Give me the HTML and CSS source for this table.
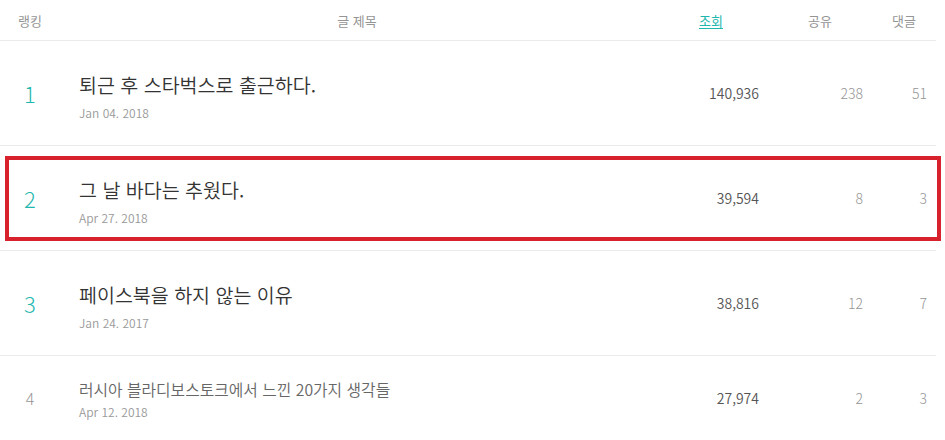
FILE: index.html
```html
<!DOCTYPE html>
<html lang="ko">
<head>
<meta charset="utf-8">
<title>랭킹</title>
<link rel="stylesheet" href="styles.css">
</head>
<body>
<div class="ranking">
  <div class="head">
    <div class="c-rank">랭킹</div>
    <div class="c-title">글 제목</div>
    <div class="c-num active">조회</div>
    <div class="c-num">공유</div>
    <div class="c-num">댓글</div>
  </div>

  <div class="row top">
    <div class="rank">1</div>
    <div class="post">
      <div class="title">퇴근 후 스타벅스로 출근하다.</div>
      <div class="date">Jan 04. 2018</div>
    </div>
    <div class="views">140,936</div>
    <div class="stat">238</div>
    <div class="stat">51</div>
  </div>

  <div class="row top highlighted">
    <div class="rank">2</div>
    <div class="post">
      <div class="title">그 날 바다는 추웠다.</div>
      <div class="date">Apr 27. 2018</div>
    </div>
    <div class="views">39,594</div>
    <div class="stat">8</div>
    <div class="stat">3</div>
    <div class="mark"></div>
  </div>

  <div class="row top">
    <div class="rank">3</div>
    <div class="post">
      <div class="title">페이스북을 하지 않는 이유</div>
      <div class="date">Jan 24. 2017</div>
    </div>
    <div class="views">38,816</div>
    <div class="stat">12</div>
    <div class="stat">7</div>
  </div>

  <div class="row">
    <div class="rank">4</div>
    <div class="post">
      <div class="title">러시아 블라디보스토크에서 느낀 20가지 생각들</div>
      <div class="date">Apr 12. 2018</div>
    </div>
    <div class="views">27,974</div>
    <div class="stat">2</div>
    <div class="stat">3</div>
  </div>
</div>
</body>
</html>
```

FILE: styles.css
```css
html, body {
  margin: 0;
  padding: 0;
  background: #fff;
}

body {
  font-family: "Noto Sans CJK KR", "Noto Sans", sans-serif;
  color: #333;
}

.ranking {
  width: 936px;
}

.head,
.row {
  display: grid;
  grid-template-columns: 60px 594px 114px 104px 64px;
  align-items: center;
  border-bottom: 1px solid #ebebeb;
}

.head {
  height: 40px;
  font-size: 13px;
  color: #959595;
}

.head > div {
  text-align: center;
}

.head .active {
  color: #1fb7ae;
  text-decoration: underline;
  text-underline-offset: 2px;
}

.row {
  position: relative;
  height: 84px;
}

.row.top {
  height: 104px;
}

.rank {
  text-align: center;
  font-size: 16px;
  font-weight: 300;
  color: #959595;
}

.row.top .rank {
  font-size: 22px;
  color: #1fb7ae;
}

.post {
  padding-left: 19px;
  padding-top: 4px;
}

.row.top .post {
  padding-top: 8px;
}

.title {
  font-size: 15.8px;
  line-height: 22px;
  font-weight: 350;
  color: #666;
}

.row.top .title {
  font-size: 19.5px;
  line-height: 26px;
  color: #333;
}

.date {
  margin-top: 2px;
  font-size: 12px;
  line-height: 18px;
  font-weight: 350;
  color: #999;
}

.row.top .date {
  margin-top: 6px;
}

.views,
.stat {
  text-align: right;
  padding-right: 9px;
  font-size: 14px;
  font-weight: 300;
}

.views {
  font-weight: 350;
  color: #555;
}

.stat {
  color: #959595;
}

.mark {
  position: absolute;
  left: 5px;
  top: 10px;
  width: 936px;
  height: 85px;
  box-sizing: border-box;
  border: 4px solid #d7222e;
  pointer-events: none;
}
```
